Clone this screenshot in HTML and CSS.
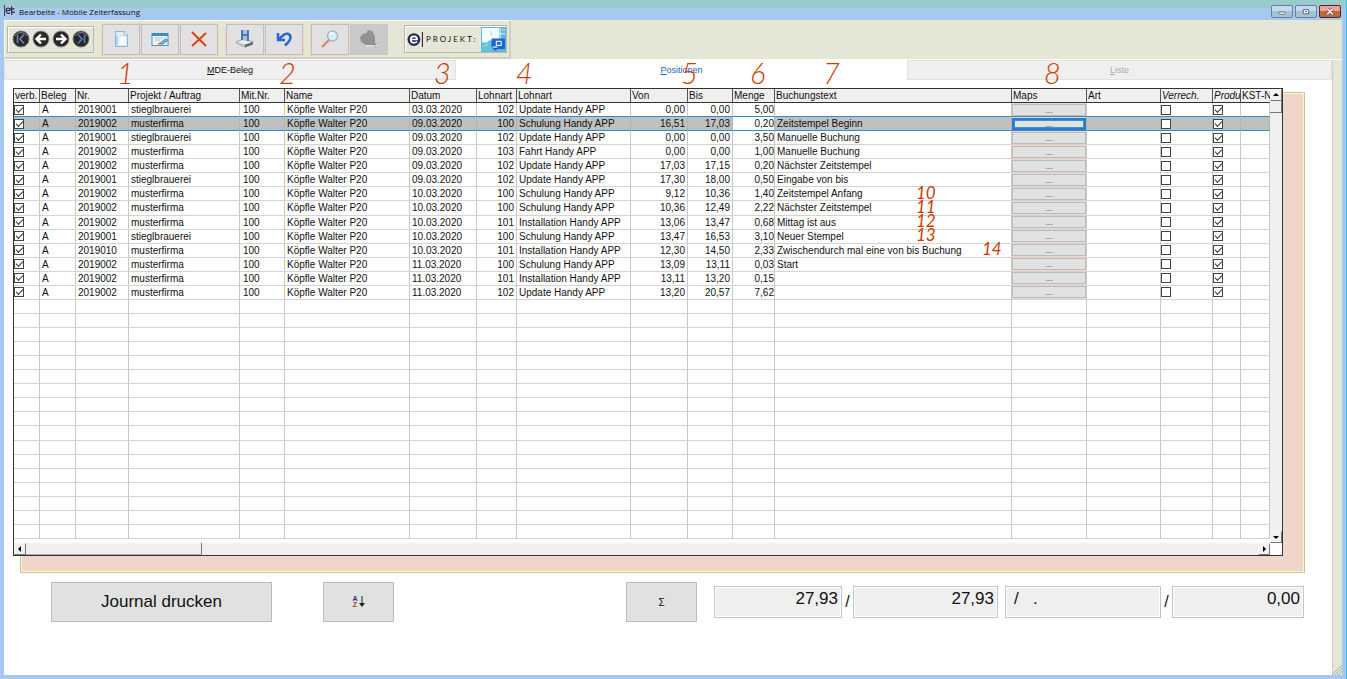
FILE: index.html
```html
<!DOCTYPE html>
<html lang="de">
<head>
<meta charset="utf-8">
<title>Bearbeite - Mobile Zeiterfassung</title>
<link rel="stylesheet" href="styles.css">
</head>
<body>
<div class="window">
  <header class="titlebar">
    <svg class="app-icon" viewBox="0 0 10 10" aria-hidden="true"><rect width="10" height="10" fill="#b9c6d8"/><path d="M.5 0v10" stroke="#445"/><path d="M2 5h3.500c0-3-3.500-3-3.500 0s2.500 3 3.500 2M7 1v8M5.500 3.500h4M7 6.500h3" fill="none" stroke="#15295a"/></svg>
    <h1>Bearbeite - Mobile Zeiterfassung</h1>
    <div class="captions">
      <button class="caption" aria-label="Minimieren"><svg viewBox="0 0 22 12"><rect x="7.500" y="6.500" width="7" height="2.500" rx="1" fill="#fff" stroke="#667"/></svg></button>
      <button class="caption" aria-label="Maximieren"><svg viewBox="0 0 22 12"><path d="M8 4h6v4.500H8z" fill="#fff" stroke="#556"/><path d="M10 6h2" stroke="#556"/></svg></button>
      <button class="caption close" aria-label="Schließen"><svg viewBox="0 0 22 12"><path d="M8 3l6 6M14 3L8 9" stroke="#655" stroke-width="3"/><path d="M8 3l6 6M14 3L8 9" stroke="#fff" stroke-width="1.600"/></svg></button>
    </div>
  </header>

  <div class="toolbar-row">
    <div class="toolbar">
      <div class="nav">
        <button aria-label="Erster"><svg viewBox="0 0 18 18"><circle cx="9" cy="9" r="8" fill="#292929" stroke="#777"/><path d="M3 6a7 7 0 0 1 12 0" fill="none" stroke="#888"/><path d="M5.500 5v8M12 4.500L8 9l4 4.500" fill="none" stroke="#6c83b8" stroke-width="1.600"/></svg></button>
        <button aria-label="Zurück"><svg viewBox="0 0 18 18"><circle cx="9" cy="9" r="8" fill="#292929" stroke="#888"/><path d="M14 9H5M9 4.500L4.500 9 9 13.500" fill="none" stroke="#fff" stroke-width="2.400"/></svg></button>
        <button aria-label="Weiter"><svg viewBox="0 0 18 18"><circle cx="9" cy="9" r="8" fill="#292929" stroke="#888"/><path d="M4 9h9M9 4.500L13.500 9 9 13.500" fill="none" stroke="#fff" stroke-width="2.400"/></svg></button>
        <button aria-label="Letzter"><svg viewBox="0 0 18 18"><circle cx="9" cy="9" r="8" fill="#292929" stroke="#777"/><path d="M3 6a7 7 0 0 1 12 0" fill="none" stroke="#888"/><path d="M12.500 5v8M6 4.500L10 9l-4 4.500" fill="none" stroke="#5878c8" stroke-width="1.600"/></svg></button>
      </div>
      <div class="group">
        <button class="tool" aria-label="Neu"><svg viewBox="0 0 20 20"><path d="M4.500 2.500h9l3 3v12h-12z" fill="#dcecf9" stroke="#8fb4d8"/><path d="M13 2.500V6h3.500" fill="#fff" stroke="#8fb4d8"/><path d="M9 8h6v8H7z" fill="#fff" opacity=".7"/><path d="M6 7v9" stroke="#b8d4ee" stroke-width="2"/></svg></button>
        <button class="tool" aria-label="Bearbeiten"><svg viewBox="0 0 20 20"><rect x="2" y="4.500" width="16" height="12" fill="#e9f4fc" stroke="#4d94c8"/><path d="M2 5.500h16" stroke="#3d8bc9" stroke-width="3"/><path d="M5 9h8M5 11h5" stroke="#a8c8e0"/><path d="M10 14L16 9.500l2 2-6 4z" fill="#6fb2e4" stroke="#3a78ac" stroke-width=".7"/><path d="M7 15.500l3-2.500 2 2.500z" fill="#d57c3c"/></svg></button>
        <button class="tool" aria-label="Löschen"><svg viewBox="0 0 20 20"><path d="M3 3l14 14M17 4L3 17" fill="none" stroke="#d8400c" stroke-width="1.900"/></svg></button>
      </div>
      <div class="group">
        <button class="tool" aria-label="Speichern"><svg viewBox="0 0 20 20"><path d="M1 13l8-3 9 3-8 5z" fill="#eee" stroke="#999"/><path d="M1 13l9 2.500v3L1 15z" fill="#bbb"/><path d="M10 15.500l8-2.500v2.500l-8 3z" fill="#666"/><path d="M7 1v10l6 1.500V1z" fill="#a9bfe0"/><path d="M7 1v10M13 1v11M7 6h6" fill="none" stroke="#3a62a8" stroke-width="1.600"/></svg></button>
        <button class="tool" aria-label="Rückgängig"><svg viewBox="0 0 20 20"><path d="M4 4v7h7M4.500 10.500L9 6.500c3-3 7-2 7.500 1.500 0 4-3 6-5.500 8.500" fill="none" stroke="#2d69cd" stroke-width="2.600"/></svg></button>
      </div>
      <div class="group">
        <button class="tool" aria-label="Suchen"><svg viewBox="0 0 20 20"><path d="M9 11l-7 7" stroke="#d48b5a" stroke-width="2.400"/><circle cx="12.500" cy="7" r="5" fill="#d5f0fc" stroke="#9ab8cc" stroke-width="1.400"/><path d="M9.500 6q1-2.500 4-2.500" fill="none" stroke="#fff" stroke-width="1.500"/></svg></button>
        <button class="tool off" aria-label="Drucken" disabled><svg viewBox="0 0 20 20"><path d="M1 8l4-4 2 1 2-4 4 1 3 5v7l2 1-1 3-4-2H7l-5-3z" fill="#929292"/><path d="M7 17h8l4-1" fill="none" stroke="#eee"/></svg></button>
      </div>
      <div class="brand">
        <svg class="brand-e" viewBox="0 0 16 16" aria-hidden="true"><circle cx="6.500" cy="8" r="6" fill="#252a5e"/><path d="M3.500 8h6c0-4-6-4-6 0s4 3.500 6 2" fill="none" stroke="#fff" stroke-width="1.600"/><path d="M14.500 1v14" stroke="#222"/></svg>
        <span>PROJEKT:</span>
        <svg class="brand-pic" viewBox="0 0 26 26" aria-hidden="true"><rect width="26" height="26" fill="#65b6df"/><path d="M1 1h18v13H8l-3 5H1z" fill="#f2fbfe"/><path d="M1 16h9v9H1z" fill="#63c6cf"/><path d="M11 12h14v11H17l-2 2-4-4z" fill="#1b64cb"/><path d="M20 1v10M22 3h3M20 7h5" fill="none" stroke="#e5f8ff"/><path d="M16 15h5v4h-5zM12 21h5" fill="none" stroke="#d5ecff" stroke-width="1.300"/><path d="M9 5q3-1 2 2l-1 2M3 20l4-2" fill="none" stroke="#a4d9ee"/></svg>
      </div>
    </div>
  </div>

  <main class="content">
    <div class="tabs" role="tablist">
      <button class="tab" role="tab"><u>M</u>DE-Beleg</button>
      <button class="tab active" role="tab" aria-selected="true"><u>P</u>ositionen</button>
      <button class="tab" role="tab" disabled><u>L</u>iste</button>
    </div>

    <div class="stage">
      <div class="panel"></div>
      <div class="grid">
        <div class="viewport">
          <table>
            <colgroup><col class="w26"><col class="w36"><col class="w53"><col class="w111"><col class="w45"><col class="w125"><col class="w67"><col class="w40"><col class="w114"><col class="w57"><col class="w45"><col class="w42"><col><col class="w75"><col class="w74"><col class="w52"><col class="w28"><col class="w29"></colgroup>
            <thead><tr><th>verb.</th><th>Beleg</th><th>Nr.</th><th>Projekt / Auftrag</th><th>Mit.Nr.</th><th>Name</th><th>Datum</th><th>Lohnart</th><th>Lohnart</th><th>Von</th><th>Bis</th><th>Menge</th><th>Buchungstext</th><th>Maps</th><th>Art</th><th class="it">Verrech.</th><th class="it">Produ</th><th>KST-N</th></tr></thead>
            <tbody id="rows"></tbody>
          </table>
        </div>
        <div class="vscroll">
          <button class="sb" aria-label="Nach oben"><svg viewBox="0 0 10 10"><path d="M5 3l3 3H2z"/></svg></button>
          <div class="vthumb"></div>
          <button class="sb down" aria-label="Nach unten"><svg viewBox="0 0 10 10"><path d="M5 7l3-3H2z"/></svg></button>
        </div>
        <div class="hscroll">
          <button class="sb" aria-label="Nach links"><svg viewBox="0 0 10 10"><path d="M3 5l3-3v6z"/></svg></button>
          <div class="hthumb"></div>
          <button class="sb right" aria-label="Nach rechts"><svg viewBox="0 0 10 10"><path d="M7 5L4 2v6z"/></svg></button>
        </div>
      </div>
      <div class="notes">
        <span class="n1">1</span><span class="n2">2</span><span class="n3">3</span><span class="n4">4</span><span class="n5">5</span><span class="n6">6</span><span class="n7">7</span><span class="n8">8</span>
        <span class="small n10">10</span><span class="small n11">11</span><span class="small n12">12</span><span class="small n13">13</span><span class="small n14">14</span>
      </div>
    </div>

    <footer class="footer">
      <button class="big journal">Journal drucken</button>
      <button class="big sort" aria-label="Sortieren"><span class="az"><span>A</span><span>Z</span></span><svg viewBox="0 0 6 12"><path d="M3 0v10" stroke="#222"/><path d="M0 7h6l-3 4z" fill="#222"/></svg></button>
      <button class="big sum">Σ</button>
      <input class="f1" aria-label="Summe Menge" value="27,93" readonly>
      <span class="slash">/</span>
      <input class="f2" aria-label="Summe gesamt" value="27,93" readonly>
      <input class="f3" aria-label="Datum" value="/   ." readonly>
      <span class="slash">/</span>
      <input class="f4" aria-label="Betrag" value="0,00" readonly>
    </footer>
    <svg class="grip" viewBox="0 0 10 10" aria-hidden="true"><path d="M0 10L10 0M3 10l7-7M6 10l4-4" stroke="#aaa"/></svg>
  </main>
</div>
<script src="rows.js"></script>
</body>
</html>
```

FILE: rows.js
```js
const S = 'stieglbrauerei', M = 'musterfirma';
const U = ['102', 'Update Handy APP'], C = ['100', 'Schulung Handy APP'];
const I = ['101', 'Installation Handy APP'], F = ['103', 'Fahrt Handy APP'];
const entries = [
  ['2019001', S, '03.03.2020', U, '0,00', '0,00', '5,00', ''],
  ['2019002', M, '09.03.2020', C, '16,51', '17,03', '0,20', 'Zeitstempel Beginn'],
  ['2019001', S, '09.03.2020', U, '0,00', '0,00', '3,50', 'Manuelle Buchung'],
  ['2019002', M, '09.03.2020', F, '0,00', '0,00', '1,00', 'Manuelle Buchung'],
  ['2019002', M, '09.03.2020', U, '17,03', '17,15', '0,20', 'Nächster Zeitstempel'],
  ['2019001', S, '09.03.2020', U, '17,30', '18,00', '0,50', 'Eingabe von bis'],
  ['2019002', M, '10.03.2020', C, '9,12', '10,36', '1,40', 'Zeitstempel Anfang'],
  ['2019002', M, '10.03.2020', C, '10,36', '12,49', '2,22', 'Nächster Zeitstempel'],
  ['2019002', M, '10.03.2020', I, '13,06', '13,47', '0,68', 'Mittag ist aus'],
  ['2019001', S, '10.03.2020', C, '13,47', '16,53', '3,10', 'Neuer Stempel'],
  ['2019010', M, '10.03.2020', I, '12,30', '14,50', '2,33', 'Zwischendurch mal eine von bis Buchung'],
  ['2019002', M, '11.03.2020', C, '13,09', '13,11', '0,03', 'Start'],
  ['2019002', M, '11.03.2020', I, '13,11', '13,20', '0,15', ''],
  ['2019002', M, '11.03.2020', U, '13,20', '20,57', '7,62', '']
];
const box = (label, on) => `<td class="ck"><input type="checkbox" aria-label="${label}"${on ? ' checked' : ''}></td>`;
const rowClass = i => (i === 1 ? 'selected' : i === 0 ? 'before-selected' : '');
let html = entries.map(([nr, projekt, datum, art, von, bis, menge, text], i) =>
  `<tr class="${rowClass(i)}">${box('verb.', true)}<td>A</td><td>${nr}</td><td>${projekt}</td><td class="mit">100</td><td>Köpfle Walter P20</td><td>${datum}</td><td class="num">${art[0]}</td><td>${art[1]}</td><td class="num">${von}</td><td class="num">${bis}</td><td class="num menge">${menge}</td><td>${text}</td><td class="maps"><button>...</button></td><td></td>${box('Verrech.', false)}${box('Produktiv', true)}<td></td></tr>`
).join('');
html += ('<tr>' + '<td></td>'.repeat(18) + '</tr>').repeat(17);
document.getElementById('rows').innerHTML = html;
```

FILE: styles.css
```css
* { box-sizing: border-box; }
body {
  margin: 0;
  font-family: "Liberation Sans", Arial, sans-serif;
  font-size: 10px;
  color: #111;
  background: #98cccc;
}
button, input { font: inherit; color: inherit; margin: 0; padding: 0; }
svg { display: block; }

.window {
  display: flex;
  flex-direction: column;
  min-height: 100vh;
  border-right: 1px solid #2cc0f5;
  padding: 5px 4px 4px;
  background: linear-gradient(#98cccc 8px, #a6c9f0 8px);
}
.titlebar { display: flex; align-items: flex-start; height: 15px; gap: 4px; }
.app-icon { width: 11px; height: 11px; }
.titlebar h1 {
  flex: 1;
  margin: 0;
  font: 400 8px/14px "Open Sans", "Noto Sans", sans-serif;
}
.captions { display: flex; gap: 2px; padding-right: 1px; }
.caption {
  width: 22px;
  height: 13px;
  border: 1px solid #6d7f9c;
  border-radius: 2px;
  background: linear-gradient(#c3d8f1 50%, #9fc4d6 50%);
}
.caption svg { width: 20px; height: 11px; }
.caption.close { border-color: #4c2a20; background: linear-gradient(#f1a097 50%, #ba6a3a 50%); }

.toolbar-row { background: #e6e6d6; border-bottom: 1px solid #fff; }
.toolbar {
  display: flex;
  align-items: center;
  width: max-content;
  height: 39px;
  padding: 0 2px;
  gap: 8px;
  border: 1px solid #fafaf0;
  border-right: 2px solid #d0d0c2;
  border-bottom: 2px solid #d0d0c2;
}
.nav {
  display: flex;
  align-items: center;
  gap: 2px;
  height: 27px;
  padding: 0 3px 0 4px;
  border: 1px solid #b8b8aa;
  box-shadow: inset 1px 1px #fff;
}
.nav button { width: 18px; height: 18px; border: 0; background: none; }
.nav svg { width: 18px; height: 18px; }
.group { display: flex; gap: 1px; }
.tool {
  display: grid;
  place-items: center;
  width: 38px;
  height: 31px;
  border: 1px solid #bebebe;
  outline: 1px solid #efd6c8;
  background: #e1e1e1;
}
.tool svg { width: 20px; height: 20px; }
.tool.off { border-color: #c8c8c8; outline: 0; background: #c9c9c9; }
.brand {
  display: flex;
  align-items: center;
  gap: 2px;
  height: 28px;
  margin-left: 8px;
  padding: 0 0 0 2px;
  border: 1px solid #b8b8aa;
  box-shadow: inset 1px 1px #fff;
}
.brand span { width: 53px; font: 8px/12px Lato, sans-serif; letter-spacing: 2px; }
.brand-e { width: 17px; height: 17px; }
.brand-pic { width: 25px; height: 25px; }

.content {
  position: relative;
  flex: 1;
  display: flex;
  flex-direction: column;
  padding-right: 10px;
  background: linear-gradient(to left, #e6e6d6 9px, #ccc 9px, #ccc 10px, #fff 10px);
}
.tabs { display: grid; grid-template-columns: 452px 1fr 425px; height: 20px; }
.tab {
  border: 1px solid #e2e2e2;
  background: #efefef;
  font-size: 9px;
  line-height: 18px;
}
.tab.active { border: 0; background: #fff; color: #1c66b0; }
.tab:disabled { color: #aaa; }

.stage { position: relative; display: grid; margin: 8px 27px 0 9px; }
.panel {
  grid-area: 1 / 1;
  margin: 4px 0 0 7px;
  border: 1px solid #c6c6a0;
  box-shadow: inset 0 0 0 1px #fbf6c4;
  background: #efd6c8;
}
.grid {
  grid-area: 1 / 1;
  display: grid;
  grid-template-columns: 1fr 12px;
  grid-template-rows: auto 12px;
  margin: 0 22px 17px 0;
  border: 1px solid #333;
  background: #fff;
}
.viewport { height: 454px; overflow: hidden; }
table { width: 100%; height: 450px; border-collapse: separate; border-spacing: 0; table-layout: fixed; }
th {
  height: 14px;
  padding: 0 0 0 1px;
  overflow: hidden;
  border-right: 1px solid #555;
  border-bottom: 1px solid #333;
  background: #efefef;
  font-weight: 400;
  line-height: 13px;
  text-align: left;
  white-space: nowrap;
}
th:last-child { border-right: 0; }
.it { font-style: italic; }
td {
  height: 14px;
  padding: 0 1px 0 2px;
  border-right: 1px solid #c8c8c8;
  border-bottom: 1px solid #d4d4d4;
  line-height: 13px;
  white-space: nowrap;
}
td.num { padding-right: 2px; text-align: right; }
td.menge { padding-right: 0; }
td.mit { padding-left: 3px; }
.before-selected td { border-bottom-color: #2a90cc; }
.selected td {
  border-bottom-color: #2a90cc;
  border-right-color: #b4b4b4;
  background: #c0c0c0;
}
.selected td.menge { background: #fff; }
td.ck { padding: 0; }
.ck input {
  display: block;
  width: 10px;
  height: 10px;
  border: 1px solid #444;
  appearance: none;
  background: #fff;
}
.ck input:checked::before {
  content: "";
  display: block;
  width: 6px;
  height: 3px;
  margin: 1px;
  border: solid #333;
  border-width: 0 0 1px 1px;
  transform: rotate(-45deg);
}
td.maps { padding: 0; background: #efd6c8; }
.maps button {
  display: block;
  width: 100%;
  height: 12px;
  border: 1px solid #bcbcbc;
  background: #e1e1e1;
  font-size: 9px;
  line-height: 10px;
  color: #555;
}
.selected .maps button { border: 2px solid #2a78d0; line-height: 8px; box-shadow: inset 0 0 0 1px #2d9bd2; }
.w26 { width: 26px; } .w28 { width: 28px; } .w29 { width: 29px; } .w36 { width: 36px; }
.w40 { width: 40px; } .w42 { width: 42px; } .w45 { width: 45px; } .w52 { width: 52px; }
.w53 { width: 53px; } .w57 { width: 57px; } .w67 { width: 67px; } .w74 { width: 74px; }
.w75 { width: 75px; } .w111 { width: 111px; } .w114 { width: 114px; } .w125 { width: 125px; }

.vscroll { display: flex; flex-direction: column; background: #f0f0f0; }
.hscroll { display: flex; background: #f0f0f0; }
.sb {
  width: 12px;
  height: 12px;
  border: 1px solid #f8f8f8;
  border-right-color: #777;
  border-bottom-color: #777;
  background: #f0f0f0;
}
.sb svg { width: 10px; height: 10px; }
.vthumb { height: 12px; border-right: 1px solid #777; border-bottom: 1px solid #777; }
.hthumb { width: 176px; border-right: 1px solid #777; border-bottom: 1px solid #aaa; }
.sb.down { margin-top: auto; }
.sb.right { margin-left: auto; }

.notes {
  position: absolute;
  inset: 0;
  pointer-events: none;
  color: #cc3c00;
  font: italic 300 29px/22px Lato, sans-serif;
}
.notes span { position: absolute; top: -26px; }
.notes .small { font-size: 17px; font-weight: 400; line-height: 14px; }
.n1 { left: 104px; } .n2 { left: 266px; } .n3 { left: 421px; } .n4 { left: 503px; }
.n5 { left: 668px; } .n6 { left: 737px; } .n7 { left: 810px; } .n8 { left: 1031px; }
.notes .n10 { left: 903px; top: 98px; } .notes .n11 { left: 903px; top: 112px; }
.notes .n12 { left: 903px; top: 126px; } .notes .n13 { left: 903px; top: 140px; }
.notes .n14 { left: 969px; top: 154px; }

.footer { display: flex; align-items: center; margin: 9px 28px 0 47px; }
.big { height: 40px; border: 1px solid #bcbcbc; background: #e1e1e1; }
.journal { width: 221px; font-size: 17px; }
.sort { display: flex; align-items: center; justify-content: center; gap: 1px; width: 71px; margin-left: 51px; }
.sort svg { width: 6px; height: 12px; }
.az { display: grid; font: 700 7px/6px "Liberation Sans", sans-serif; color: #24386e; }
.az span + span { color: #8c4a20; }
.sum { width: 71px; margin-left: auto; }
.footer input {
  height: 32px;
  padding: 0 3px 7px;
  border: 1px solid #c4c4c4;
  outline: 1px solid #fff;
  outline-offset: -2px;
  background: #efefef;
  font-size: 17px;
  text-align: right;
}
.slash { width: 11px; font-size: 16px; text-align: center; }
.footer .f1 { width: 128px; margin-left: 17px; }
.footer .f2 { width: 145px; }
.footer .f3 { width: 156px; margin-left: 7px; padding-left: 8px; text-align: left; }
.footer .f4 { width: 132px; }
.grip { position: absolute; right: 0; bottom: 0; width: 10px; height: 10px; }
```
